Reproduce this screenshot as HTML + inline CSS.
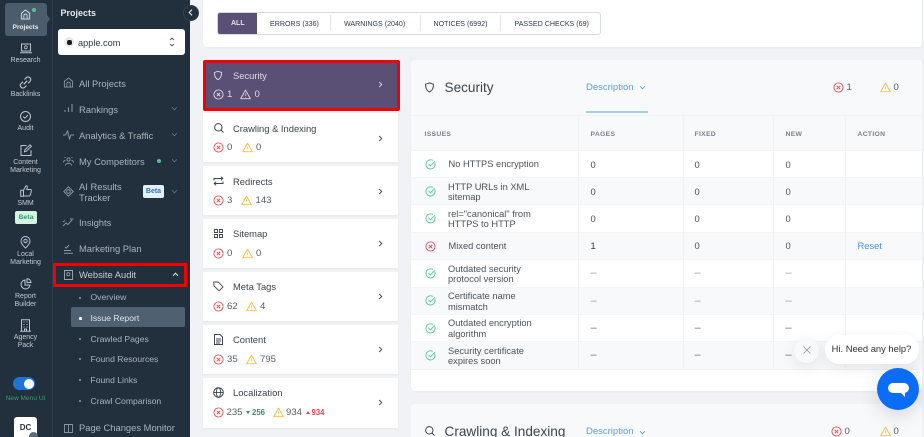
<!DOCTYPE html>
<html><head><meta charset="utf-8">
<style>
html,body{margin:0;padding:0;width:924px;height:437px;overflow:hidden;background:#f0f2f5;font-family:"Liberation Sans",sans-serif}
#p{position:relative;width:924px;height:437px;overflow:hidden}
.a{position:absolute}
.t{position:absolute;white-space:nowrap;line-height:12px;height:12px;transform:translateY(-6px)}
.c{transform:translate(-50%,-6px);text-align:center}
.r{font-size:7px;line-height:8px;height:8px;transform:translate(-50%,-4px);color:#c2cbd3}
.m{color:#a9b4be;font-size:9.400px;margin-top:.5px}
.s{color:#a9b4be;font-size:8.600px}
.d{position:absolute;width:2px;height:2px;border-radius:1px;background:#8d99a4;left:79px}
.card{position:absolute;left:203px;width:195px;height:49px;background:#fff;box-shadow:0 1px 2px rgba(30,40,60,.05)}
.ct{font-size:9.400px;color:#3a424d;left:233px}
.cn{font-size:9.600px;color:#555d66;margin-top:.5px}
.th{font-size:6.800px;font-weight:bold;color:#76838f;letter-spacing:.3px;margin-top:1.500px}
.td{font-size:9.300px;color:#4a525b;line-height:10.500px;margin-top:1px}
.n{font-size:9.400px;color:#4a525b}
.h{font-size:11px;color:#9aa0a7}
.k{font-size:11px;color:#6a727a}
.two{position:absolute;left:448px;font-size:9.300px;line-height:10.600px;color:#4a525b;white-space:nowrap;margin-top:.5px}
.tab{font-size:7.100px;color:#333b46;transform:translate(0,-6px);margin-top:1px}
svg{position:absolute;overflow:visible;fill:none}
</style></head><body><div id="p">
<svg width="0" height="0" style="position:absolute">
<symbol id="err" viewBox="0 0 12 12"><circle cx="6" cy="6" r="5" fill="none" stroke="currentColor" stroke-width="1"/><path d="M4.200 4.200l3.600 3.600M7.800 4.200L4.200 7.800" stroke="currentColor" stroke-width="1.100" fill="none"/></symbol>
<symbol id="warn" viewBox="0 0 12 12"><path d="M6 1.200L11.300 10.600H.7Z" fill="none" stroke="currentColor" stroke-width="1" stroke-linejoin="round"/><path d="M6 4.800v3M6 8.800v.6" stroke="currentColor" stroke-width=".8" fill="none"/></symbol>
<symbol id="ok" viewBox="0 0 12 12"><path d="M10.600 4A5 5 0 1 1 8.500 1.600" fill="none" stroke="#5ccb97" stroke-width="1.050"/><path d="M3.800 5.400l2.100 2.100 4.900-5" fill="none" stroke="#5ccb97" stroke-width="1.050"/></symbol>
<symbol id="shield" viewBox="0 0 12 12"><path d="M6 1l4.300 1.400c.2 3.600-.9 6.800-4.300 8.600C2.600 9.200 1.500 6 1.700 2.400Z" fill="none" stroke="currentColor" stroke-width="1.100"/></symbol>
<symbol id="chev" viewBox="0 0 6 8"><path d="M1.500 1l3 3-3 3" fill="none" stroke="currentColor" stroke-width="1.100"/></symbol>
<symbol id="down" viewBox="0 0 8 6"><path d="M1 1.500l3 3 3-3" fill="none" stroke="currentColor" stroke-width="1"/></symbol>
<symbol id="home" viewBox="0 0 12 12"><path d="M1.500 11V4.800L6 1l4.500 3.800V11ZM4.200 11V7.300a1.800 1.800 0 0 1 3.600 0V11" fill="none" stroke="currentColor" stroke-width="1"/></symbol>
</svg>

<!-- sidebar -->
<div class="a" style="left:0;top:0;width:190px;height:437px;background:#222f3c"></div>
<div class="a" style="left:52px;top:0;width:1px;height:437px;background:#2f3d4a"></div>
<div class="a" style="left:5px;top:3px;width:42px;height:33px;border-radius:3px;background:#4b5d6c"></div>
<div class="a" style="left:47px;top:15px;width:0;height:0;border-left:3px solid #4b5d6c;border-top:4px solid transparent;border-bottom:4px solid transparent"></div>
<svg style="left:20px;top:9px;color:#dde3e8" width="11" height="11"><use href="#home"/></svg>
<div class="a" style="left:32px;top:8px;width:4px;height:4px;border-radius:2px;background:#58c48c"></div>
<div class="t r" style="left:25.500px;top:27.500px;color:#e8ecef;font-weight:bold;font-size:6.500px">Projects</div>
<svg style="left:20px;top:43px;color:#bcc6cf" width="12" height="11" viewBox="0 0 12 11"><path d="M1.500 1h9v7h-9ZM0 9.800h12" stroke="currentColor" stroke-width="1"/><circle cx="5.800" cy="4.300" r="1.500" stroke="currentColor" stroke-width=".8"/></svg>
<div class="t r" style="left:25.500px;top:61px">Research</div>
<svg style="left:19px;top:76px;color:#bcc6cf" width="13" height="13" viewBox="0 0 13 13"><path d="M5.500 3.500l1.700-1.700a2.500 2.500 0 0 1 3.800 3.600L9 7.300M7.500 9.500l-1.700 1.700a2.500 2.500 0 0 1-3.800-3.600L4 5.700M4.700 8.300l3.600-3.600" stroke="currentColor" stroke-width="1.100"/></svg>
<div class="t r" style="left:25.500px;top:95px">Backlinks</div>
<svg style="left:20px;top:111px;color:#bcc6cf" width="11" height="11" viewBox="0 0 11 11"><circle cx="5.500" cy="5.500" r="5" stroke="currentColor" stroke-width="1"/><path d="M3.200 5.500l1.700 1.700 3-3.200" stroke="currentColor" stroke-width="1"/></svg>
<div class="t r" style="left:25.500px;top:129px">Audit</div>
<svg style="left:20px;top:144px;color:#bcc6cf" width="12" height="12" viewBox="0 0 12 12"><path d="M6.500 1.500H1v10h10V6M4.500 7.800l.4-2L10 .8l1.400 1.400-5 5Z" stroke="currentColor" stroke-width="1"/></svg>
<div class="t r" style="left:25.500px;top:162.500px">Content</div>
<div class="t r" style="left:25.500px;top:170.500px">Marketing</div>
<svg style="left:20px;top:185px;color:#bcc6cf" width="12" height="12" viewBox="0 0 12 12"><path d="M3.500 5.200L6 .8c1 0 1.600.8 1.300 1.800L6.800 4.500h3.500c.8 0 1.200.7 1 1.400l-1 4.200c-.2.600-.6.900-1.200.9H3.500ZM.7 5.200h2.800v6H.7Z" stroke="currentColor" stroke-width="1"/></svg>
<div class="t r" style="left:25.500px;top:204px">SMM</div>
<div class="a" style="left:15px;top:211px;width:22px;height:13px;border-radius:2px;background:#d5f3e2"></div>
<div class="t c" style="left:26px;top:218px;font-size:6.800px;font-weight:bold;color:#2f9e69">Beta</div>
<svg style="left:20px;top:236px;color:#bcc6cf" width="11" height="13" viewBox="0 0 11 13"><path d="M5.500 12C3 9.500 1 7.500 1 5a4.500 4.500 0 0 1 9 0c0 2.500-2 4.500-4.500 7Z" stroke="currentColor" stroke-width="1"/><circle cx="5.500" cy="5" r="1.700" stroke="currentColor" stroke-width="1"/></svg>
<div class="t r" style="left:25.500px;top:254.500px">Local</div>
<div class="t r" style="left:25.500px;top:262.500px">Marketing</div>
<svg style="left:20px;top:278px;color:#bcc6cf" width="12" height="12" viewBox="0 0 12 12"><path d="M5 2a4.500 4.500 0 1 0 5 5H5ZM7 .7v3.800h4A4 4 0 0 0 7 .7Z" stroke="currentColor" stroke-width="1"/></svg>
<div class="t r" style="left:25.500px;top:296.500px">Report</div>
<div class="t r" style="left:25.500px;top:304.500px">Builder</div>
<svg style="left:20px;top:319px;color:#bcc6cf" width="11" height="13" viewBox="0 0 11 13"><path d="M1.500.7h8v11.600h-8ZM0 12.300h11M3.500 3h1M6.500 3h1M3.500 5.500h1M6.500 5.500h1M3.500 8h1M6.500 8h1M4.500 12V10h2v2" stroke="currentColor" stroke-width="1"/></svg>
<div class="t r" style="left:25.500px;top:338px">Agency</div>
<div class="t r" style="left:25.500px;top:346px">Pack</div>
<div class="a" style="left:13px;top:377px;width:22px;height:13px;border-radius:7px;background:#1f74d6"></div>
<div class="a" style="left:24px;top:378.500px;width:10px;height:10px;border-radius:5px;background:#fff"></div>
<div class="t r" style="left:25.500px;top:398.500px;color:#3f9a70;font-size:6.600px">New Menu UI</div>
<div class="a" style="left:14px;top:417px;width:23px;height:22px;border-radius:3px;background:#fff"></div>
<div class="t c" style="left:25.500px;top:428px;font-size:8px;font-weight:bold;color:#2b3440">DC</div>
<div class="a" style="left:29px;top:432px;width:9px;height:9px;border-radius:5px;background:#5d6a76"></div>

<div class="t" style="left:60.500px;top:13px;color:#e6eaee;font-size:9px;font-weight:bold">Projects</div>
<div class="a" style="left:58px;top:29px;width:127px;height:26px;border-radius:3px;background:#fff"></div>
<div class="a" style="left:64px;top:37px;width:10px;height:10px;border-radius:5px;background:#e9ebee"></div>
<div class="a" style="left:66.500px;top:39.500px;width:5px;height:5.500px;border-radius:2px;background:#1c1c1e"></div>
<div class="t" style="left:78px;top:42.500px;font-size:9.200px;color:#2d3945">apple.com</div>
<svg style="left:169px;top:37px;color:#4a5560" width="6" height="10" viewBox="0 0 6 10"><path d="M1 3l2-2 2 2M1 7l2 2 2-2" stroke="currentColor" stroke-width=".9"/></svg>

<svg style="left:63px;top:77px;color:#8896a2" width="11" height="11"><use href="#home"/></svg>
<div class="t m" style="left:79px;top:83px">All Projects</div>
<svg style="left:64px;top:103px;color:#8896a2" width="9" height="10" viewBox="0 0 9 10"><path d="M1 7v2M4.500 4.500V9M8 1v8" stroke="currentColor" stroke-width="1"/></svg>
<div class="t m" style="left:79px;top:109px">Rankings</div>
<svg style="left:63px;top:130px;color:#8896a2" width="11" height="10" viewBox="0 0 11 10"><path d="M0 5h2.500L4.500 1l2 8 1.500-4h3" stroke="currentColor" stroke-width="1"/></svg>
<div class="t m" style="left:79px;top:135px">Analytics &amp; Traffic</div>
<svg style="left:63px;top:156px;color:#8896a2" width="11" height="10" viewBox="0 0 11 10"><circle cx="5.500" cy="3.500" r="1.600" stroke="currentColor" stroke-width=".9"/><path d="M2.500 9.500c0-3 6-3 6 0M.5 6.500C.5 5 1.500 4.500 2.500 4.500M10.500 6.500c0-1.500-1-2-2-2M1.500 1.500h1M8.500 1.500h1" stroke="currentColor" stroke-width=".9"/></svg>
<div class="t m" style="left:79px;top:161px">My Competitors</div>
<div class="a" style="left:156.500px;top:159px;width:4px;height:4px;border-radius:2px;background:#58c48c"></div>
<svg style="left:63px;top:186px;color:#8896a2" width="11" height="11" viewBox="0 0 11 11"><path d="M5.500.8l4.700 4.700-4.700 4.700L.8 5.500Z" stroke="currentColor" stroke-width="1"/><circle cx="5.500" cy="5.500" r="1.800" stroke="currentColor" stroke-width="1"/></svg>
<div class="t m" style="left:79px;top:186.500px">AI Results</div>
<div class="t m" style="left:79px;top:197px">Tracker</div>
<div class="a" style="left:143px;top:185px;width:21px;height:13px;border-radius:2px;background:#e3effb"></div>
<div class="t c" style="left:153.500px;top:192px;font-size:7px;font-weight:bold;color:#2c74c9">Beta</div>
<svg style="left:63px;top:218px;color:#8896a2" width="11" height="9" viewBox="0 0 11 9"><path d="M0 8l3-3 2 1.500L9 2M7 1h3v.5M0 4l2-1.500" stroke="currentColor" stroke-width="1"/></svg>
<div class="t m" style="left:79px;top:222.500px">Insights</div>
<svg style="left:64px;top:244px;color:#8896a2" width="10" height="10" viewBox="0 0 10 10"><path d="M1 3l1.200 1.200L5 1M0 6.500h7M0 9.300h9" stroke="currentColor" stroke-width="1"/></svg>
<div class="t m" style="left:79px;top:248.500px">Marketing Plan</div>
<svg style="left:64px;top:270px;color:#9da8b2" width="9" height="10" viewBox="0 0 9 10"><path d="M.5.500h8v9h-8Z" stroke="currentColor" stroke-width=".9"/><circle cx="4.300" cy="4.300" r="1.600" stroke="currentColor" stroke-width=".8"/></svg>
<div class="t m" style="left:79px;top:274.500px;color:#c6ced5">Website Audit</div>
<div class="a" style="left:53px;top:263px;width:128px;height:18px;border:3px solid #f40000"></div>
<svg style="left:172px;top:272px;color:#e2e7eb" width="7" height="5" viewBox="0 0 8 6"><path d="M1 4.500l3-3 3 3" stroke="currentColor" stroke-width="1.200"/></svg>
<svg style="left:171px;top:106px;color:#6b7986" width="7" height="5"><use href="#down"/></svg>
<svg style="left:171px;top:132px;color:#6b7986" width="7" height="5"><use href="#down"/></svg>
<svg style="left:171px;top:158px;color:#6b7986" width="7" height="5"><use href="#down"/></svg>
<svg style="left:171px;top:189px;color:#6b7986" width="7" height="5"><use href="#down"/></svg>

<div class="a" style="left:71px;top:307px;width:114px;height:20px;border-radius:2px;background:#4f6171"></div>
<div class="d" style="top:297px"></div><div class="t s" style="left:90.500px;top:297px">Overview</div>
<div class="d" style="top:316.500px;background:#fff;width:3px;height:3px"></div><div class="t s" style="left:90.500px;top:318px;color:#dfe4e9">Issue Report</div>
<div class="d" style="top:338px"></div><div class="t s" style="left:90.500px;top:339px">Crawled Pages</div>
<div class="d" style="top:358px"></div><div class="t s" style="left:90.500px;top:359px">Found Resources</div>
<div class="d" style="top:379px"></div><div class="t s" style="left:90.500px;top:380px">Found Links</div>
<div class="d" style="top:400px"></div><div class="t s" style="left:90.500px;top:401px">Crawl Comparison</div>
<svg style="left:64px;top:424px;color:#8896a2" width="9" height="9" viewBox="0 0 9 9"><path d="M.5.500h8v8h-8ZM4.500.5v8" stroke="currentColor" stroke-width=".9"/></svg>
<div class="t m" style="left:79px;top:427.500px">Page Changes Monitor</div>
<div class="a" style="left:183px;top:5px;width:14px;height:14px;border-radius:8px;background:#222f3c;border:1px solid #34434f"></div>
<svg style="left:188px;top:9px;color:#e6eaee" width="5" height="7" viewBox="0 0 5 7"><path d="M4 .7L1.200 3.500 4 6.300" stroke="currentColor" stroke-width="1.100"/></svg>

<!-- top card -->
<div class="a" style="left:203px;top:-4px;width:719px;height:51px;background:#fff;border-radius:4px;box-shadow:0 1px 2px rgba(30,40,60,.04)"></div>
<div class="a" style="left:217px;top:12px;width:382px;height:21px;border:1px solid #d5d9e1;border-radius:3px;background:#fff"></div>
<div class="a" style="left:218px;top:13px;width:39px;height:21px;background:#5a5075;border-radius:2px 0 0 2px"></div>
<div class="a" style="left:330px;top:15px;width:1px;height:16px;background:#e3e6ea"></div>
<div class="a" style="left:420px;top:15px;width:1px;height:16px;background:#e3e6ea"></div>
<div class="a" style="left:500px;top:15px;width:1px;height:16px;background:#e3e6ea"></div>
<div class="t tab" style="left:231px;top:23px;color:#e4e1ec;font-weight:bold;font-size:7px">ALL</div>
<div class="t tab" style="left:270px;top:23px">ERRORS (336)</div>
<div class="t tab" style="left:344px;top:23px">WARNINGS (2040)</div>
<div class="t tab" style="left:433.500px;top:23px">NOTICES (6992)</div>
<div class="t tab" style="left:514.500px;top:23px">PASSED CHECKS (69)</div>

<!-- left cards -->
<div class="a" style="left:203px;top:60px;width:191px;height:45px;background:#5a5075;border:3px solid #f40000;border-radius:2px"></div>
<svg style="left:213px;top:70px;color:#dcd9e4" width="10" height="11"><use href="#shield"/></svg>
<div class="t ct" style="top:75.500px;color:#dedbe6">Security</div>
<svg style="left:213px;top:89px;color:#dcd9e4" width="11" height="11"><use href="#err"/></svg>
<div class="t cn" style="left:227px;top:94.500px;color:#dcd9e4">1</div>
<svg style="left:240px;top:89px;color:#dcd9e4" width="11" height="11"><use href="#warn"/></svg>
<div class="t cn" style="left:254.500px;top:94.500px;color:#dcd9e4">0</div>
<svg style="left:378px;top:81px;color:#dcd9e4" width="5" height="7"><use href="#chev"/></svg>

<div class="card" style="top:113px"></div>
<svg style="left:214px;top:123px;color:#3d4550" width="10" height="10" viewBox="0 0 10 10"><circle cx="4.300" cy="4.300" r="3.700" stroke="currentColor" stroke-width="1"/><path d="M7 7l2.500 2.500" stroke="currentColor" stroke-width="1"/></svg>
<div class="t ct" style="top:128.500px">Crawling &amp; Indexing</div>
<svg style="left:213px;top:142px;color:#e8525f" width="11" height="11"><use href="#err"/></svg>
<div class="t cn" style="left:227px;top:147.500px">0</div>
<svg style="left:242px;top:142px;color:#f7bf3f" width="11" height="11"><use href="#warn"/></svg>
<div class="t cn" style="left:256px;top:147.500px">0</div>
<svg style="left:378px;top:134.500px;color:#3d4550" width="5" height="7"><use href="#chev"/></svg>

<div class="card" style="top:166px"></div>
<svg style="left:213px;top:176px;color:#3d4550" width="11" height="10" viewBox="0 0 11 10"><path d="M1 4.500V2.500h8.500M8 .7l1.800 1.800L8 4.300M10 5.500v2H1.500M3 5.700L1.200 7.500 3 9.300" stroke="currentColor" stroke-width="1"/></svg>
<div class="t ct" style="top:181.500px">Redirects</div>
<svg style="left:213px;top:195px;color:#e8525f" width="11" height="11"><use href="#err"/></svg>
<div class="t cn" style="left:227px;top:200.500px">3</div>
<svg style="left:241px;top:195px;color:#f7bf3f" width="11" height="11"><use href="#warn"/></svg>
<div class="t cn" style="left:255.500px;top:200.500px">143</div>
<svg style="left:378px;top:187.500px;color:#3d4550" width="5" height="7"><use href="#chev"/></svg>

<div class="card" style="top:219px"></div>
<svg style="left:214px;top:229px;color:#3d4550" width="9" height="9" viewBox="0 0 9 9"><path d="M.5.500h3v3h-3ZM5.500.5h3v3h-3ZM.5 5.500h3v3h-3ZM5.500 5.500h3v3h-3Z" stroke="currentColor" stroke-width=".9"/></svg>
<div class="t ct" style="top:233.500px">Sitemap</div>
<svg style="left:213px;top:248px;color:#e8525f" width="11" height="11"><use href="#err"/></svg>
<div class="t cn" style="left:227px;top:253.500px">0</div>
<svg style="left:242px;top:248px;color:#f7bf3f" width="11" height="11"><use href="#warn"/></svg>
<div class="t cn" style="left:256px;top:253.500px">0</div>
<svg style="left:378px;top:240px;color:#3d4550" width="5" height="7"><use href="#chev"/></svg>

<div class="card" style="top:271.500px"></div>
<svg style="left:213px;top:281px;color:#3d4550" width="11" height="11" viewBox="0 0 11 11"><path d="M.7 1h4.500L10 6l-3.800 3.800L1 5Z" stroke="currentColor" stroke-width=".9"/></svg>
<div class="t ct" style="top:286.500px">Meta Tags</div>
<svg style="left:213px;top:301px;color:#e8525f" width="11" height="11"><use href="#err"/></svg>
<div class="t cn" style="left:227px;top:306.500px">62</div>
<svg style="left:246px;top:301px;color:#f7bf3f" width="11" height="11"><use href="#warn"/></svg>
<div class="t cn" style="left:260px;top:306.500px">4</div>
<svg style="left:378px;top:293px;color:#3d4550" width="5" height="7"><use href="#chev"/></svg>

<div class="card" style="top:325px"></div>
<svg style="left:214px;top:334px;color:#3d4550" width="9" height="11" viewBox="0 0 9 11"><path d="M.5.500h5.500L8.500 3v7.500h-8Z" fill="#fff" stroke="currentColor" stroke-width="1"/><path d="M2 5h5M2 7h5M2 9h4" stroke="currentColor" stroke-width=".9"/></svg>
<div class="t ct" style="top:339.500px">Content</div>
<svg style="left:213px;top:354px;color:#e8525f" width="11" height="11"><use href="#err"/></svg>
<div class="t cn" style="left:227px;top:359.500px">35</div>
<svg style="left:246px;top:354px;color:#f7bf3f" width="11" height="11"><use href="#warn"/></svg>
<div class="t cn" style="left:260px;top:359.500px">795</div>
<svg style="left:378px;top:346px;color:#3d4550" width="5" height="7"><use href="#chev"/></svg>

<div class="card" style="top:377.500px;height:50px"></div>
<svg style="left:213px;top:387px;color:#3d4550" width="11" height="11" viewBox="0 0 11 11"><circle cx="5.500" cy="5.500" r="4.800" stroke="currentColor" stroke-width="1"/><ellipse cx="5.500" cy="5.500" rx="2.100" ry="4.800" stroke="currentColor" stroke-width=".9"/><path d="M.7 5.500h9.600" stroke="currentColor" stroke-width=".9"/></svg>
<div class="t ct" style="top:392.500px">Localization</div>
<svg style="left:213px;top:407px;color:#e8525f" width="11" height="11"><use href="#err"/></svg>
<div class="t cn" style="left:226.500px;top:412.500px">235</div>
<div class="a" style="left:246px;top:411px;width:0;height:0;border-top:3px solid #2f8f62;border-left:2px solid transparent;border-right:2px solid transparent"></div>
<div class="t" style="left:252px;top:412.500px;font-size:7.800px;font-weight:bold;color:#3a8f68">256</div>
<svg style="left:272.500px;top:407px;color:#f7bf3f" width="11" height="11"><use href="#warn"/></svg>
<div class="t cn" style="left:286px;top:412.500px">934</div>
<div class="a" style="left:305.500px;top:410.500px;width:0;height:0;border-bottom:3px solid #e23b4a;border-left:2px solid transparent;border-right:2px solid transparent"></div>
<div class="t" style="left:311.500px;top:412.500px;font-size:7.800px;font-weight:bold;color:#e0485a">934</div>
<svg style="left:378px;top:399px;color:#3d4550" width="5" height="7"><use href="#chev"/></svg>

<!-- panel -->
<div class="a" style="left:411px;top:60px;width:511px;height:331px;background:#fff;border-radius:4px;overflow:hidden;box-shadow:0 1px 2px rgba(30,40,60,.04)">
 <div class="a" style="left:0;top:0;width:511px;height:90px;background:#f8f9fb"></div>
 <div class="a" style="left:0;top:55px;width:511px;height:1px;background:#f0f2f5"></div>
 <div class="a" style="left:0;top:90px;width:511px;height:1px;background:#f0f2f5"></div>
 <div class="a" style="left:0;top:117px;width:511px;height:28px;background:#f8f9fb"></div>
 <div class="a" style="left:0;top:172px;width:511px;height:28px;background:#f8f9fb"></div>
 <div class="a" style="left:0;top:227px;width:511px;height:27px;background:#f8f9fb"></div>
 <div class="a" style="left:0;top:281px;width:511px;height:28px;background:#f8f9fb"></div>
 <div class="a" style="left:0;top:117px;width:511px;height:1px;background:#f2f4f6"></div>
 <div class="a" style="left:0;top:144px;width:511px;height:1px;background:#f2f4f6"></div>
 <div class="a" style="left:0;top:172px;width:511px;height:1px;background:#f2f4f6"></div>
 <div class="a" style="left:0;top:199px;width:511px;height:1px;background:#f2f4f6"></div>
 <div class="a" style="left:0;top:227px;width:511px;height:1px;background:#f2f4f6"></div>
 <div class="a" style="left:0;top:254px;width:511px;height:1px;background:#f2f4f6"></div>
 <div class="a" style="left:0;top:281px;width:511px;height:1px;background:#f2f4f6"></div>
 <div class="a" style="left:167px;top:56px;width:1px;height:253px;background:#f0f2f5"></div>
 <div class="a" style="left:272px;top:56px;width:1px;height:253px;background:#f0f2f5"></div>
 <div class="a" style="left:362px;top:56px;width:1px;height:253px;background:#f0f2f5"></div>
 <div class="a" style="left:434px;top:56px;width:1px;height:253px;background:#f0f2f5"></div>
 <div class="a" style="left:0;top:309px;width:511px;height:1px;background:#f0f2f5"></div>
</div>
<svg style="left:424px;top:82px;color:#3d4550" width="11" height="11"><use href="#shield"/></svg>
<div class="t" style="left:444.500px;top:88px;font-size:13.600px;color:#3d4550;line-height:16px;height:16px;transform:translateY(-8px)">Security</div>
<div class="t" style="left:586px;top:88px;font-size:9.500px;color:#5b9fe0">Description</div>
<svg style="left:639px;top:85px;color:#4c92dc" width="7" height="5"><use href="#down"/></svg>
<div class="a" style="left:586px;top:110.500px;width:62px;height:2px;background:#a8ccef"></div>
<svg style="left:833px;top:82px;color:#e8525f" width="11" height="11"><use href="#err"/></svg>
<div class="t cn" style="left:846.500px;top:87.500px">1</div>
<svg style="left:880px;top:82px;color:#f7bf3f" width="11" height="11"><use href="#warn"/></svg>
<div class="t cn" style="left:893.500px;top:87.500px">0</div>

<div class="t th" style="left:424.500px;top:133px">ISSUES</div>
<div class="t th" style="left:590.500px;top:133px">PAGES</div>
<div class="t th" style="left:694.500px;top:133px">FIXED</div>
<div class="t th" style="left:785.500px;top:133px">NEW</div>
<div class="t th" style="left:857.500px;top:133px">ACTION</div>

<svg style="left:425px;top:158.500px" width="11" height="11"><use href="#ok"/></svg>
<div class="t td" style="left:448.500px;top:164px">No HTTPS encryption</div>
<svg style="left:425px;top:186px" width="11" height="11"><use href="#ok"/></svg>
<div class="two" style="top:181px">HTTP URLs in XML<br>sitemap</div>
<svg style="left:425px;top:213px" width="11" height="11"><use href="#ok"/></svg>
<div class="two" style="top:208px">rel="canonical" from<br>HTTPS to HTTP</div>
<svg style="left:425px;top:240.500px;color:#e8525f" width="11" height="11"><use href="#err"/></svg>
<div class="t td" style="left:448.500px;top:246px">Mixed content</div>
<svg style="left:425px;top:268px" width="11" height="11"><use href="#ok"/></svg>
<div class="two" style="top:263px">Outdated security<br>protocol version</div>
<svg style="left:425px;top:295px" width="11" height="11"><use href="#ok"/></svg>
<div class="two" style="top:290.500px">Certificate name<br>mismatch</div>
<svg style="left:425px;top:322.500px" width="11" height="11"><use href="#ok"/></svg>
<div class="two" style="top:317.500px">Outdated encryption<br>algorithm</div>
<svg style="left:425px;top:349.500px" width="11" height="11"><use href="#ok"/></svg>
<div class="two" style="top:345px">Security certificate<br>expires soon</div>

<div class="t n" style="left:590.500px;top:164.500px">0</div><div class="t n" style="left:694.500px;top:164.500px">0</div><div class="t n" style="left:785.500px;top:164.500px">0</div>
<div class="t n" style="left:590.500px;top:191.500px">0</div><div class="t n" style="left:694.500px;top:191.500px">0</div><div class="t n" style="left:785.500px;top:191.500px">0</div>
<div class="t n" style="left:590.500px;top:219px">0</div><div class="t n" style="left:694.500px;top:219px">0</div><div class="t n" style="left:785.500px;top:219px">0</div>
<div class="t n" style="left:590.500px;top:246px;color:#2f3842">1</div><div class="t n" style="left:694.500px;top:246px">0</div><div class="t n" style="left:785.500px;top:246px">0</div>
<div class="t" style="left:857.500px;top:246px;font-size:9.400px;color:#4c92dc">Reset</div>
<div class="t h" style="left:590.500px;top:273px">–</div><div class="t h" style="left:694.500px;top:273px">–</div><div class="t h" style="left:785.500px;top:273px">–</div>
<div class="t h" style="left:590.500px;top:300.500px">–</div><div class="t h" style="left:694.500px;top:300.500px">–</div><div class="t h" style="left:785.500px;top:300.500px">–</div>
<div class="t k" style="left:590.500px;top:327.500px">–</div><div class="t k" style="left:694.500px;top:327.500px">–</div><div class="t k" style="left:785.500px;top:327.500px">–</div>
<div class="t k" style="left:590.500px;top:354.500px">–</div><div class="t k" style="left:694.500px;top:354.500px">–</div><div class="t k" style="left:785.500px;top:354.500px">–</div>

<!-- next panel -->
<div class="a" style="left:411px;top:404px;width:511px;height:40px;background:#f8f9fb;border-radius:4px"></div>
<svg style="left:425px;top:426px;color:#3d4550" width="10" height="10" viewBox="0 0 10 10"><circle cx="4.300" cy="4.300" r="3.700" stroke="currentColor" stroke-width="1"/><path d="M7 7l2.500 2.500" stroke="currentColor" stroke-width="1"/></svg>
<div class="t" style="left:444.500px;top:432px;font-size:13.600px;color:#3d4550;line-height:16px;height:16px;transform:translateY(-8px)">Crawling &amp; Indexing</div>
<div class="t" style="left:586px;top:432px;font-size:9.500px;color:#5b9fe0">Description</div>
<svg style="left:639px;top:430px;color:#4c92dc" width="7" height="5"><use href="#down"/></svg>
<svg style="left:831px;top:426px;color:#e8525f" width="11" height="11"><use href="#err"/></svg>
<div class="t cn" style="left:844.500px;top:431.500px">0</div>
<svg style="left:880px;top:426px;color:#f7bf3f" width="11" height="11"><use href="#warn"/></svg>
<div class="t cn" style="left:893.500px;top:431.500px">0</div>

<!-- chat -->
<div class="a" style="left:794px;top:338px;width:25px;height:25px;border-radius:13px;background:#f8f9fa;box-shadow:0 4px 14px rgba(40,50,70,.10)"></div>
<svg style="left:803px;top:346px;color:#8d9298" width="8" height="8" viewBox="0 0 8 8"><path d="M.5.500l7 7M7.500.5l-7 7" stroke="currentColor" stroke-width=".8"/></svg>
<div class="a" style="left:825px;top:335px;width:94px;height:29px;border-radius:14px;background:#fff;box-shadow:0 4px 14px rgba(40,50,70,.10)"></div>
<div class="t c" style="left:871.500px;top:349px;font-size:9.400px;color:#2b2f36">Hi. Need any help?</div>
<div class="a" style="left:877px;top:368px;width:42px;height:42px;border-radius:21px;background:#0b6cf5;box-shadow:0 6px 18px rgba(40,50,70,.16)"></div>
<div class="a" style="left:888px;top:383px;width:21px;height:10px;border-radius:5px;background:#fff"></div>
<div class="a" style="left:901px;top:393px;width:0;height:0;border-top:4px solid #fff;border-left:4px solid transparent"></div>
</div></body></html>
